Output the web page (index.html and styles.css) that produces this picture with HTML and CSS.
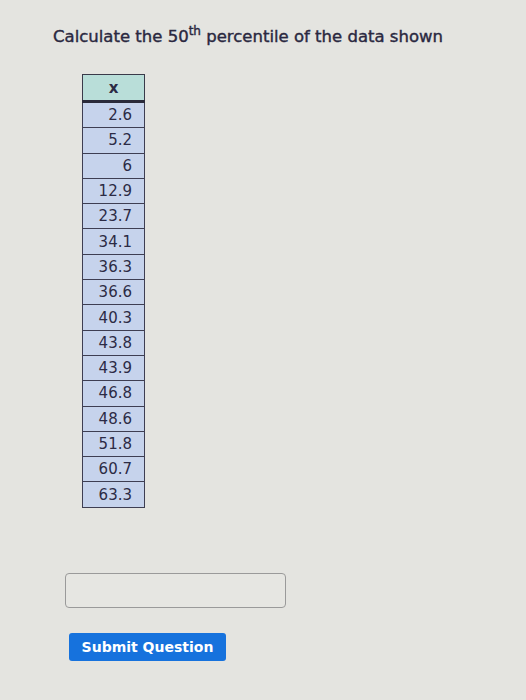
FILE: index.html
```html
<!DOCTYPE html>
<html>
<head>
<meta charset="utf-8">
<link rel="stylesheet" href="styles.css">
</head>
<body>
<div class="page">
  <h1 class="title">Calculate the 50<sup>th</sup> percentile of the data shown</h1>
  <table class="data">
    <thead><tr><th>x</th></tr></thead>
    <tbody>
      <tr><td>2.6</td></tr>
      <tr><td>5.2</td></tr>
      <tr><td>6</td></tr>
      <tr><td>12.9</td></tr>
      <tr><td>23.7</td></tr>
      <tr><td>34.1</td></tr>
      <tr><td>36.3</td></tr>
      <tr><td>36.6</td></tr>
      <tr><td>40.3</td></tr>
      <tr><td>43.8</td></tr>
      <tr><td>43.9</td></tr>
      <tr><td>46.8</td></tr>
      <tr><td>48.6</td></tr>
      <tr><td>51.8</td></tr>
      <tr><td>60.7</td></tr>
      <tr><td>63.3</td></tr>
    </tbody>
  </table>
  <input class="answer" type="text">
  <button class="submit">Submit Question</button>
</div>
</body>
</html>
```
FILE: styles.css
```css
html, body {
  margin: 0;
  padding: 0;
  background: #e4e4e0;
}
.page {
  padding: 27px 0 0 53px;
  display: flex;
  flex-direction: column;
  align-items: flex-start;
  font-family: "DejaVu Sans", Verdana, sans-serif;
  color: #2c2b45;
}
.title {
  margin: 0;
  font-size: 16.5px;
  font-weight: normal;
  -webkit-text-stroke: 0.4px #2a2840;
  line-height: 20px;
  color: #2a2840;
}
.title sup {
  font-size: 12px;
  line-height: 0;
  vertical-align: 7px;
}
.data {
  margin: 27px 0 0 29px;
  border-collapse: collapse;
  width: 63px;
  font-size: 15px;
}
.data th {
  background: #b9ded9;
  border: 1px solid #3a3a4a;
  border-bottom: 3px solid #2a2a3a;
  height: 25px;
  padding: 0;
  font-weight: bold;
  font-size: 15px;
  text-align: center;
}
.data td {
  background: #c6d3ec;
  border: 1px solid #3e3e52;
  height: 24.3px;
  padding: 0 12px 0 0;
  text-align: right;
}
.answer {
  margin: 65px 0 0 12px;
  width: 221px;
  height: 35px;
  box-sizing: border-box;
  border: 1px solid #9a9a9a;
  border-radius: 4px;
  background: #e6e6e2;
}
.submit {
  margin: 25px 0 0 16px;
  width: 157px;
  height: 28px;
  border: none;
  border-radius: 3px;
  background: #1672dd;
  color: #ffffff;
  font-family: "DejaVu Sans", Verdana, sans-serif;
  font-weight: bold;
  font-size: 14px;
  padding: 0;
}
```
